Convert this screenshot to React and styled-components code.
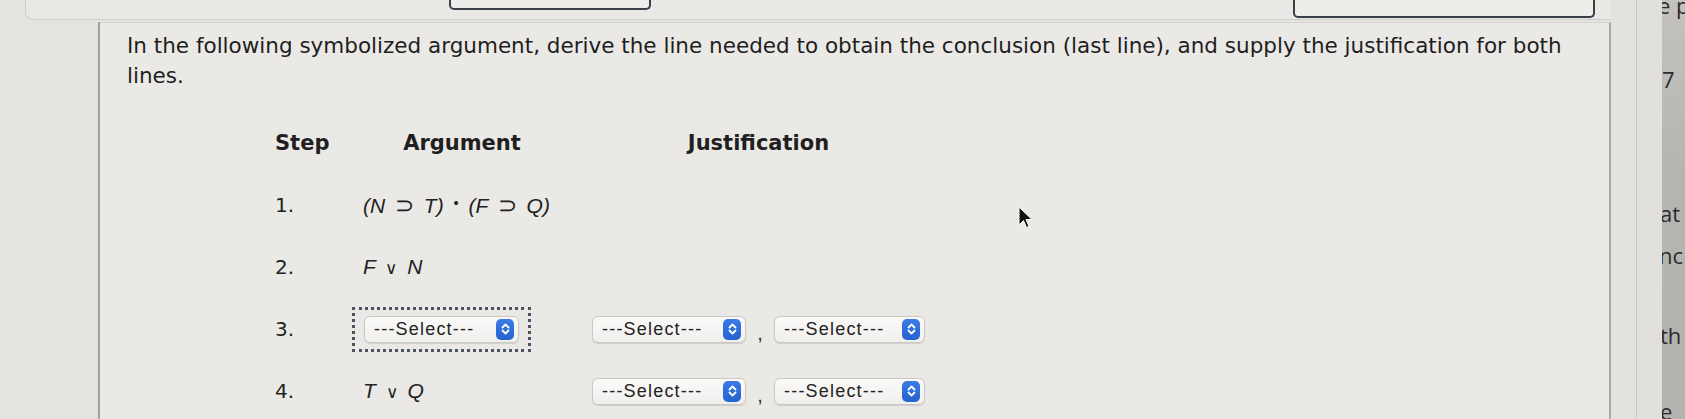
import React from "react";
import styled, { createGlobalStyle } from "styled-components";

const Global = createGlobalStyle`
  html, body { margin: 0; padding: 0; }
  body { background: #e6e4e1; overflow: hidden; }
`;

const Page = styled.div`
  width: 1685px;
  height: 419px;
  display: grid;
  grid-template-columns: 100px 1fr 26px 25px 23px;
  grid-template-rows: 22px 1fr;
  background: #e6e4e1;
  font-family: "DejaVu Sans", Verdana, sans-serif;
  color: #1f1f1f;
  position: relative;
  overflow: hidden;
`;

const TopBand = styled.div`
  grid-column: 1 / 3;
  grid-row: 1;
  padding-left: 25px;
`;

const BandInner = styled.div`
  height: 19px;
  background: #eae8e5;
  border-bottom: 1px solid #cfcdca;
  border-left: 1px solid #d3d1ce;
  border-bottom-left-radius: 8px;
  display: flex;
  align-items: flex-start;
`;

const GhostButton = styled.div`
  margin-left: ${(p) => p.$ml}px;
  width: ${(p) => p.$w}px;
  height: ${(p) => p.$h}px;
  border: 2px solid #3a3f48;
  border-top: none;
  border-radius: 0 0 5px 5px;
  background: #eeedea;
`;

const Gutter = styled.div`
  grid-column: 1;
  grid-row: 2;
  border-right: 2px solid #a3a19e;
  background: #e5e3e0;
`;

const Panel = styled.div`
  grid-column: 2;
  grid-row: 2;
  background: #ebe9e6;
  border-top: 1px solid #d4d2cf;
  border-right: 2px solid #a9a7a4;
  padding: 8px 30px 0 27px;
`;

const Prompt = styled.p`
  margin: 0;
  font-size: 21.5px;
  line-height: 30px;
  color: #1e1e1e;
`;

const Table = styled.div`
  margin-top: 21px;
  margin-left: 148px;
  display: grid;
  grid-template-columns: 57px 198px 333px;
  column-gap: 31px;
  grid-auto-rows: 62px;
  align-items: center;
`;

const Head = styled.div`
  font-weight: bold;
  font-size: 21px;
  color: #1f1f1f;
  text-align: ${(p) => (p.$center ? "center" : "left")};
`;

const StepNo = styled.div`
  font-size: 20px;
  color: #222;
`;

const Formula = styled.div`
  font-family: "Liberation Sans", Arial, sans-serif;
  font-style: italic;
  font-size: 21px;
  word-spacing: 4px;
  color: #222;
  white-space: nowrap;
`;

const Op = styled.span`
  font-style: normal;
  font-size: ${(p) => p.$size || "1em"};
  vertical-align: ${(p) => p.$raise || "baseline"};
`;

const Dotted = styled.div`
  margin-left: -11px;
  width: fit-content;
  padding: 6px 9px;
  border: 3px dotted #4d5360;
`;

const Justify = styled.div`
  display: flex;
  align-items: center;
`;

const Comma = styled.span`
  width: 28px;
  text-align: center;
  font-family: "Liberation Sans", Arial, sans-serif;
  font-size: 20px;
  color: #333;
  position: relative;
  top: 4px;
`;

const SelectBox = styled.div`
  box-sizing: border-box;
  width: ${(p) => p.$w || 154}px;
  height: 27px;
  border: 1px solid #cac8c5;
  border-radius: 6px;
  background: linear-gradient(#fbfaf8, #f0efed);
  box-shadow: 0 1px 1px rgba(0, 0, 0, 0.12);
  display: flex;
  align-items: center;
  justify-content: space-between;
  padding: 0 4px 0 9px;
`;

const SelectLabel = styled.span`
  font-family: "Liberation Sans", Arial, sans-serif;
  font-size: 18px;
  letter-spacing: 1.2px;
  color: #222;
`;

const Stepper = styled.span`
  width: 18px;
  height: 21px;
  border-radius: 5px;
  background: linear-gradient(#3a7be6, #2563cf);
  display: flex;
  align-items: center;
  justify-content: center;
`;

const SideA = styled.div`
  grid-column: 3;
  grid-row: 1 / 3;
  background: #e4e2df;
  border-right: 1px solid #c9c7c4;
`;

const SideB = styled.div`
  grid-column: 4;
  grid-row: 1 / 3;
  background: #e2e0dd;
`;

const SideText = styled.div`
  grid-column: 5;
  grid-row: 1 / 3;
  background: linear-gradient(#c4c2bf, #b7b5b2 40%, #b4b2af);
  overflow: hidden;
  display: flex;
  flex-direction: column;
  font-family: "Open Sans", "DejaVu Sans", sans-serif;
  font-size: 22px;
  color: #2b2b2b;
  white-space: nowrap;
`;

const SideLine = styled.div`
  margin-top: ${(p) => p.$mt}px;
  line-height: 26px;
  text-indent: ${(p) => p.$indent || 0}px;
`;

const Cursor = styled.svg`
  position: absolute;
  left: 1018px;
  top: 206px;
`;

function Select({ w }) {
  return (
    <SelectBox $w={w}>
      <SelectLabel>---Select---</SelectLabel>
      <Stepper>
        <svg width="11" height="16" viewBox="0 0 11 16">
          <path d="M2.5 6.5 L5.5 3.5 L8.5 6.5" fill="none" stroke="#fff" strokeWidth="1.8" strokeLinecap="round" strokeLinejoin="round" />
          <path d="M2.5 9.5 L5.5 12.5 L8.5 9.5" fill="none" stroke="#fff" strokeWidth="1.8" strokeLinecap="round" strokeLinejoin="round" />
        </svg>
      </Stepper>
    </SelectBox>
  );
}

function Pair() {
  return (
    <Justify>
      <Select w={154} />
      <Comma>,</Comma>
      <Select w={151} />
    </Justify>
  );
}

export default function App() {
  return (
    <>
      <Global />
      <Page>
        <TopBand>
          <BandInner>
            <GhostButton $ml={423} $w={198} $h={8} />
            <GhostButton $ml={642} $w={298} $h={16} />
          </BandInner>
        </TopBand>
        <Gutter />
        <Panel>
          <Prompt>
            In the following symbolized argument, derive the line needed to obtain the conclusion (last line), and supply the justification for both lines.
          </Prompt>
          <Table>
            <Head>Step</Head>
            <Head $center>Argument</Head>
            <Head $center>Justification</Head>

            <StepNo>1.</StepNo>
            <Formula>
              (N <Op $size="1.1em">⊃</Op> T) <Op $size="0.7em" $raise="0.35em">•</Op> (F <Op $size="1.1em">⊃</Op> Q)
            </Formula>
            <div />

            <StepNo>2.</StepNo>
            <Formula>
              F <Op $size="0.8em">∨</Op> N
            </Formula>
            <div />

            <StepNo>3.</StepNo>
            <Dotted>
              <Select w={155} />
            </Dotted>
            <Pair />

            <StepNo>4.</StepNo>
            <Formula>
              T <Op $size="0.8em">∨</Op> Q
            </Formula>
            <Pair />
          </Table>
        </Panel>
        <SideA />
        <SideB />
        <SideText>
          <SideLine $mt={-8} $indent={-4}>e p</SideLine>
          <SideLine $mt={48}>7</SideLine>
          <SideLine $mt={108} $indent={-2}>at</SideLine>
          <SideLine $mt={16} $indent={-3}>nc</SideLine>
          <SideLine $mt={54} $indent={-2}>th</SideLine>
          <SideLine $mt={50} $indent={-2}>e</SideLine>
        </SideText>
        <Cursor width="16" height="24" viewBox="0 0 16 24">
          <path d="M1 1 L1 19 L5.5 14.5 L8.5 21.5 L11 20.5 L8 13.5 L14 13.5 Z" fill="#111" stroke="#fff" strokeWidth="1" strokeLinejoin="round" />
        </Cursor>
      </Page>
    </>
  );
}
